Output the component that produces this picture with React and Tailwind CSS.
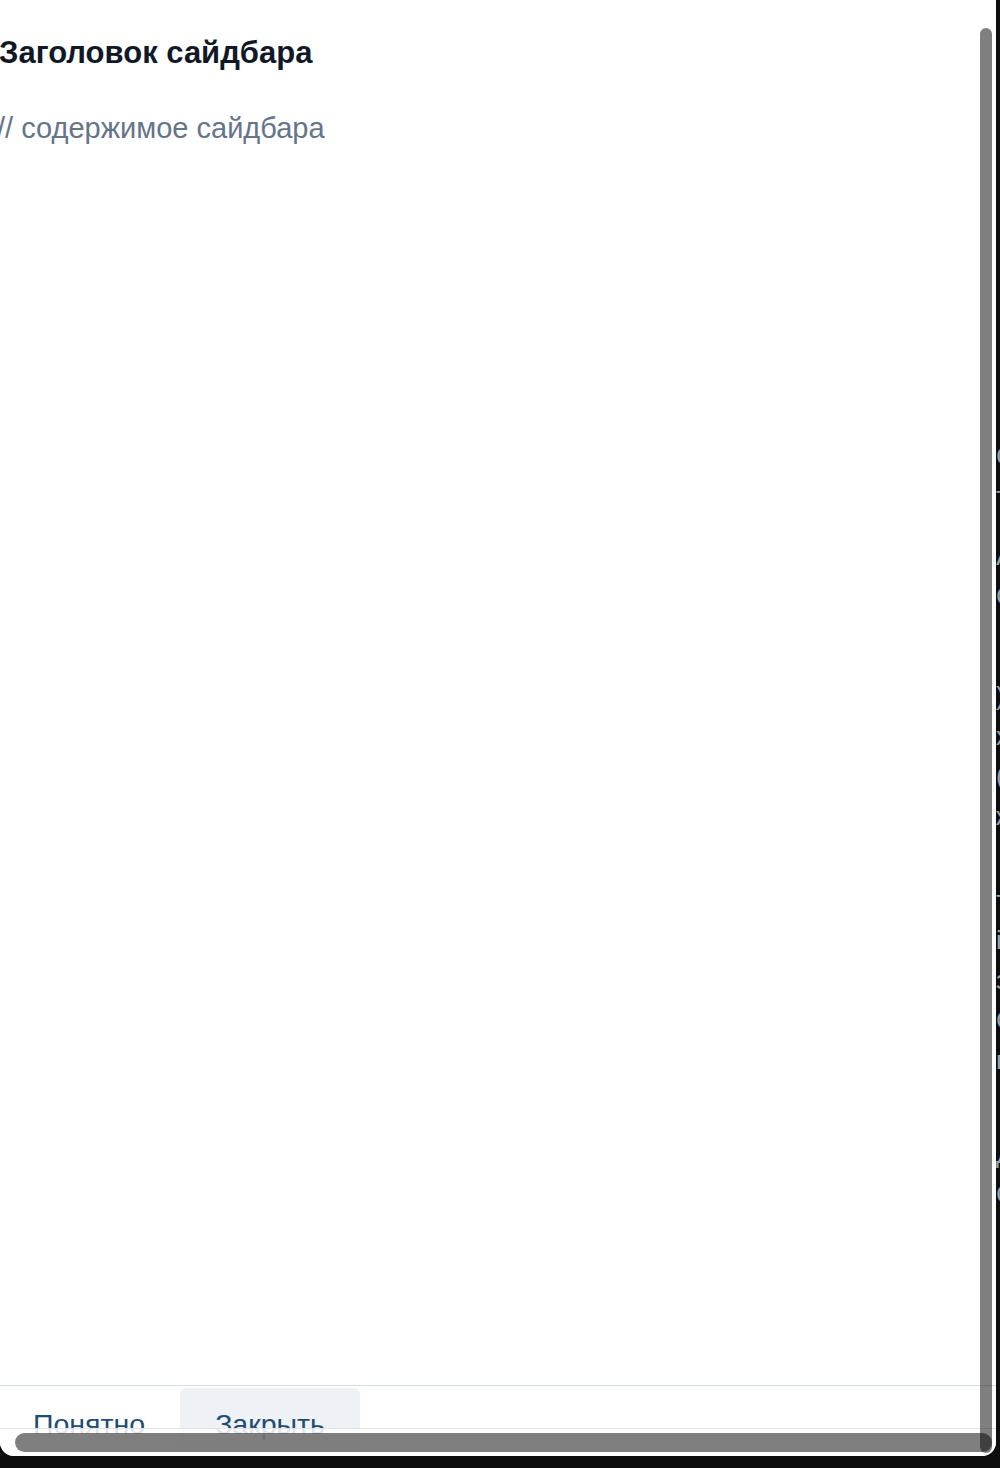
import React from "react";

function BackStrip() {
  return (
    <div className="w-[4px] h-[1456px] overflow-hidden shrink-0 text-[#9ca3af] text-[26px] leading-[40px] [font-family:'Liberation_Sans',Arial,sans-serif] whitespace-nowrap">
      <div className="h-[436px]" />
      <div>Скрыть</div>
      <div>т</div>
      <div className="h-[20px]" />
      <div>Ʌ</div>
      <div>С</div>
      <div className="h-[60px]" />
      <div>)</div>
      <div>х</div>
      <div>(</div>
      <div className="h-[14px]">ж</div>
      <div className="h-[70px]" />
      <div>т</div>
      <div>і</div>
      <div>з</div>
      <div>С</div>
      <div>п</div>
      <div className="h-[54px]" />
      <div>Д</div>
      <div>С</div>
    </div>
  );
}

export default function App() {
  return (
    <div className="w-[1000px] h-[1468px] bg-[#0d0d0d] flex items-start overflow-hidden">
      <div className="relative w-[996px] h-[1456px] shrink-0 bg-white rounded-b-[14px] overflow-hidden flex flex-col [font-family:'Liberation_Sans',Arial,sans-serif]">
        <h1 className="mt-[34px] -ml-[1px] text-[31px] leading-[37px] font-bold text-[#111827] whitespace-nowrap">
          Заголовок сайдбара
        </h1>
        <p className="mt-[36px] -ml-[3px] text-[29px] leading-[42px] text-[#64748b] whitespace-nowrap">
          // содержимое сайдбара
        </p>
        <div className="mt-auto h-[71px] border-t border-[#d3dce5] pt-[2px] flex items-start overflow-hidden">
          <button className="h-[60px] pl-[35px] pr-[35px] -ml-[2px] pt-[11px] text-[28.5px] leading-[42px] text-[#1f4c74] text-left whitespace-nowrap">
            Понятно
          </button>
          <button className="h-[60px] pl-[35px] pr-[35px] pt-[11px] bg-[#eef2f6] rounded-t-[6px] text-[28.5px] leading-[42px] text-[#1f4c74] text-left whitespace-nowrap">
            Закрыть
          </button>
        </div>

        {/* horizontal overlay scrollbar */}
        <div className="absolute left-0 right-0 bottom-0 h-[28px] bg-white/85 border-t border-[#e2e2e2]">
          <div className="absolute left-[15px] right-[4px] top-[4px] h-[19px] rounded-full bg-black/50" />
        </div>
        {/* vertical overlay scrollbar */}
        <div className="absolute right-[4px] top-[28px] w-[12px] h-[1425px] rounded-full bg-black/50" />
      </div>
      <BackStrip />
    </div>
  );
}
